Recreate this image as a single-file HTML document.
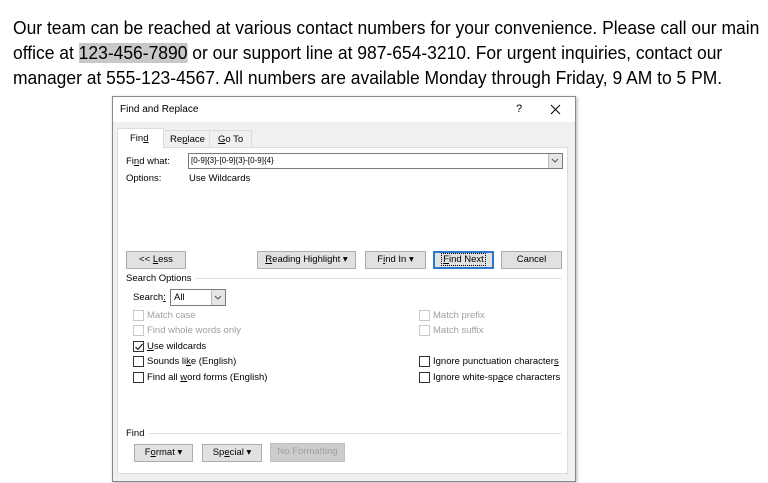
<!DOCTYPE html>
<html><head><style>
*{margin:0;padding:0;box-sizing:border-box}
body{width:768px;height:483px;background:#fff;position:relative;overflow:hidden;font-family:"Liberation Sans",sans-serif}
.ln{position:absolute;left:13px;font-size:18px;color:#000;white-space:nowrap;transform-origin:0 0;transform:scaleX(0.97)}
.hl{background:#c8c8c8}
.a{position:absolute}
.d{font-size:9.5px;color:#000;white-space:nowrap}
.btn{position:absolute;background:#e1e1e1;border:1px solid #adadad;font-size:9.5px;text-align:center;line-height:15px;white-space:nowrap}
.cb{position:absolute;width:11px;height:11px;border:1px solid #333;background:#fff}
.cb.dis{border-color:#c8c8c8}
.dis-t{color:#a0a0a0}
u{text-decoration:underline}
</style></head><body>
<div class="ln" style="top:18px">Our team can be reached at various contact numbers for your convenience. Please call our main</div>
<div class="ln" style="top:43px">office at <span class="hl">123-456-7890</span> or our support line at 987-654-3210. For urgent inquiries, contact our</div>
<div class="ln" style="top:68px">manager at 555-123-4567. All numbers are available Monday through Friday, 9 AM to 5 PM.</div>

<div class="a" style="left:112px;top:96px;width:464px;height:386px;background:#f0f0f0;border:1px solid #888;box-shadow:1px 1px 3px rgba(0,0,0,.3)"></div>
<div class="a" style="left:113px;top:97px;width:462px;height:25px;background:#fff"></div>
<div class="a d" style="left:120px;top:104px;font-size:10px">Find and Replace</div>
<div class="a d" style="left:516px;top:103px;font-size:11px">?</div>
<svg class="a" style="left:550px;top:104px" width="11" height="11"><path d="M1 1L10 10M10 1L1 10" stroke="#000" stroke-width="1"/></svg>

<div class="a" style="left:117px;top:147px;width:451px;height:327px;background:#fff;border:1px solid #dcdcdc"></div>
<div class="a" style="left:117px;top:128px;width:47px;height:21px;background:#fff;border:1px solid #dcdcdc;border-bottom:none"></div>
<div class="a" style="left:163px;top:130px;width:47px;height:17px;border:1px solid #dcdcdc;border-bottom:none"></div>
<div class="a" style="left:209px;top:130px;width:43px;height:17px;border:1px solid #dcdcdc;border-bottom:none"></div>
<div class="a d" style="left:130px;top:133px">Fin<u>d</u></div>
<div class="a d" style="left:170px;top:134px">Re<u>p</u>lace</div>
<div class="a d" style="left:218px;top:134px"><u>G</u>o To</div>

<div class="a d" style="left:126px;top:156px">Fi<u>n</u>d what:</div>
<div class="a" style="left:188px;top:153px;width:375px;height:16px;border:1px solid #7a7a7a;background:#fff"></div>
<div class="a d" style="left:191px;top:156px;font-size:8px">[0-9]{3}-[0-9]{3}-[0-9]{4}</div>
<div class="a" style="left:548px;top:154px;width:14px;height:14px;background:#e5e5e5;border-left:1px solid #bbb"></div>
<svg class="a" style="left:551px;top:158px" width="8" height="6"><path d="M1 1L4 4L7 1" stroke="#555" fill="none"/></svg>
<div class="a d" style="left:126px;top:173px">Options:</div>
<div class="a d" style="left:189px;top:173px">Use Wildcards</div>

<div class="btn" style="left:126px;top:251px;width:60px;height:18px">&lt;&lt; <u>L</u>ess</div>
<div class="btn" style="left:257px;top:251px;width:99px;height:18px"><u>R</u>eading Highlight ▾</div>
<div class="btn" style="left:365px;top:251px;width:61px;height:18px">F<u>i</u>nd In ▾</div>
<div class="btn" style="left:433px;top:251px;width:61px;height:18px;border:2px solid #2b78d0;line-height:13px"><span style="outline:1px dotted #000;padding:0 1px"><u>F</u>ind Next</span></div>
<div class="btn" style="left:501px;top:251px;width:61px;height:18px">Cancel</div>

<div class="a d" style="left:126px;top:273px">Search Options</div>
<div class="a" style="left:195px;top:278px;width:367px;height:1px;background:#e0e0e0"></div>
<div class="a d" style="left:133px;top:292px">Search<u>:</u></div>
<div class="a" style="left:170px;top:289px;width:56px;height:17px;border:1px solid #7a7a7a;background:#fff"></div>
<div class="a d" style="left:174px;top:292px">All</div>
<div class="a" style="left:211px;top:290px;width:14px;height:15px;background:#e5e5e5;border-left:1px solid #bbb"></div>
<svg class="a" style="left:214px;top:295px" width="8" height="6"><path d="M1 1L4 4L7 1" stroke="#555" fill="none"/></svg>

<div class="cb dis" style="left:133px;top:310px"></div><div class="a d dis-t" style="left:147px;top:310px">Match case</div>
<div class="cb dis" style="left:133px;top:325px"></div><div class="a d dis-t" style="left:147px;top:325px">Find whole words only</div>
<div class="cb" style="left:133px;top:341px"></div><svg class="a" style="left:134px;top:342px" width="10" height="10"><path d="M1.5 5L4 7.5L8.5 2" stroke="#000" fill="none"/></svg><div class="a d" style="left:147px;top:341px"><u>U</u>se wildcards</div>
<div class="cb" style="left:133px;top:356px"></div><div class="a d" style="left:147px;top:356px">Sounds li<u>k</u>e (English)</div>
<div class="cb" style="left:133px;top:372px"></div><div class="a d" style="left:147px;top:372px">Find all <u>w</u>ord forms (English)</div>
<div class="cb dis" style="left:419px;top:310px"></div><div class="a d dis-t" style="left:433px;top:310px">Match prefix</div>
<div class="cb dis" style="left:419px;top:325px"></div><div class="a d dis-t" style="left:433px;top:325px">Match suffix</div>
<div class="cb" style="left:419px;top:356px"></div><div class="a d" style="left:433px;top:356px">Ignore punctuation character<u>s</u></div>
<div class="cb" style="left:419px;top:372px"></div><div class="a d" style="left:433px;top:372px">Ignore white-sp<u>a</u>ce characters</div>

<div class="a d" style="left:126px;top:428px">Find</div>
<div class="a" style="left:149px;top:433px;width:413px;height:1px;background:#e0e0e0"></div>
<div class="btn" style="left:134px;top:444px;width:59px;height:18px">F<u>o</u>rmat ▾</div>
<div class="btn" style="left:202px;top:444px;width:60px;height:18px">Sp<u>e</u>cial ▾</div>
<div class="btn" style="left:270px;top:443px;width:75px;height:19px;background:#ccc;border-color:#bfbfbf;color:#a0a0a0">No Formatting</div>
</body></html>
